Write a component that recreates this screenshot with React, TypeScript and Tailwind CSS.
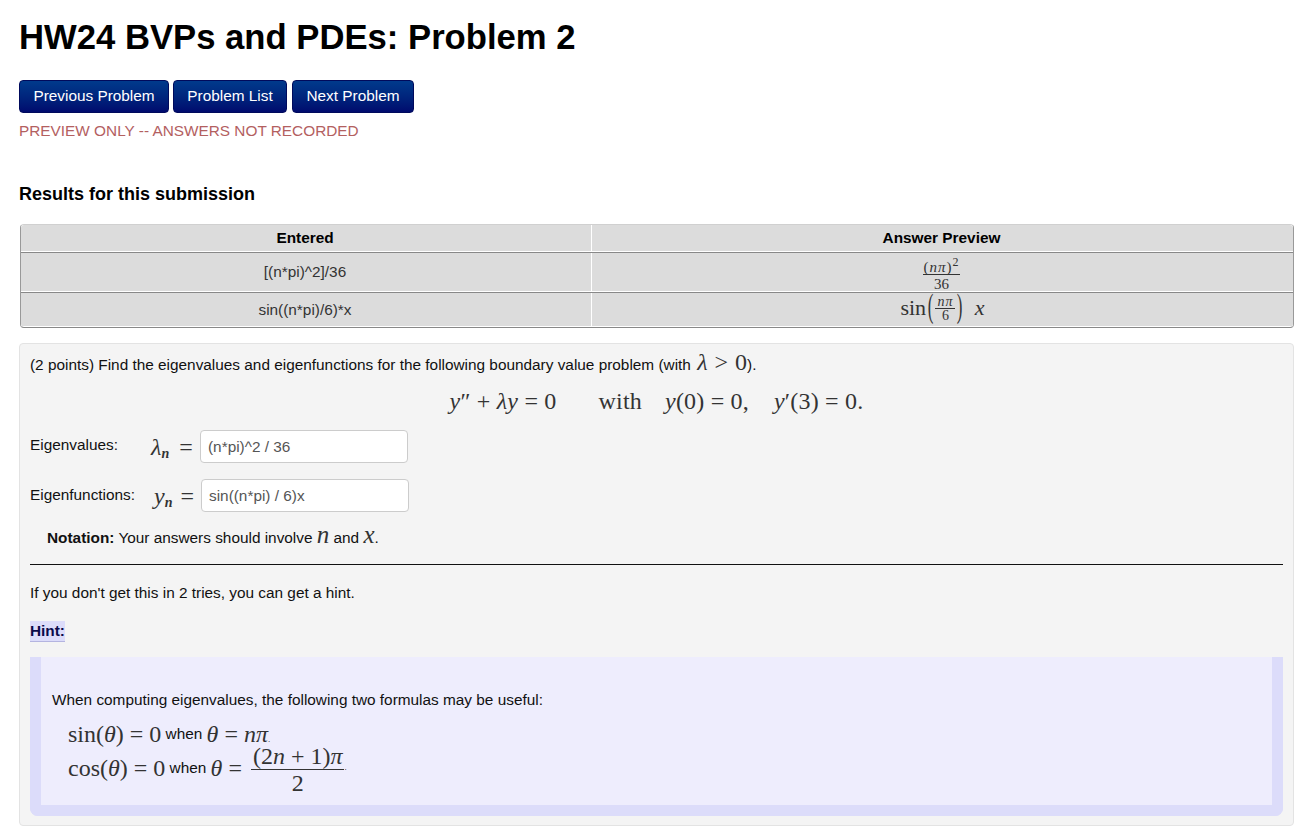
import React from "react";

const M = ({ children, className = "" }: { children: React.ReactNode; className?: string }) => (
  <span className={`font-['Liberation_Serif',serif] text-[#333] ${className}`}>{children}</span>
);
const I = ({ children }: { children: React.ReactNode }) => <i>{children}</i>;

const NavButton = ({ label, className = "" }: { label: string; className?: string }) => (
  <button className={`h-[33px] pb-[2px] rounded-[4px] border border-[#000a5c] bg-gradient-to-b from-[#003a8c] to-[#000a6e] text-white text-[15.36px] leading-none ${className}`}>
    {label}
  </button>
);

const Field = ({ value }: { value: string }) => (
  <input
    readOnly
    value={value}
    className="h-[33px] w-[208px] px-[7px] rounded-[4px] border border-[#ccc] bg-white text-[15.36px] text-[#555] outline-none font-['Liberation_Sans',sans-serif]"
  />
);

const Sep = () => (
  <div className="col-span-2 h-[2px] bg-white flex flex-col justify-end">
    <div className="h-px bg-[#888]" />
  </div>
);

export default function App() {
  return (
    <div className="min-h-[840px] bg-white pl-[19px] pr-[14px] font-['Liberation_Sans',Arial,sans-serif] text-[15.36px] text-[#111] overflow-hidden">
      <h1 className="pt-[16px] h-[80px] text-[34.66px] leading-[42px] font-bold text-black">HW24 BVPs and PDEs: Problem 2</h1>

      <div className="flex h-[33px]">
        <NavButton label="Previous Problem" className="w-[150px] mr-[4px]" />
        <NavButton label="Problem List" className="w-[114px] mr-[5px]" />
        <NavButton label="Next Problem" className="w-[122px]" />
      </div>
      <div className="mt-[9px] h-[18px] leading-[18px] text-[#b3605f]">PREVIEW ONLY -- ANSWERS NOT RECORDED</div>

      <h2 className="mt-[43px] h-[22px] text-[18px] leading-[22px] font-bold text-black">Results for this submission</h2>

      <div className="mt-[19px] ml-[1px] h-[104px] rounded-[4px] border border-[#999] border-t-[#d0d0d0] border-b-[#888] bg-white overflow-hidden">
        <div className="grid grid-cols-[570px_1fr] gap-x-px bg-white">
          <div className="h-[26px] pr-[2px] bg-[#dcdcdc] flex items-center justify-center font-bold text-black">Entered</div>
          <div className="h-[26px] pr-[2px] bg-[#dcdcdc] flex items-center justify-center font-bold text-black">Answer Preview</div>
          <Sep />
          <div className="h-[38px] pr-[2px] bg-[#dcdcdc] flex items-center justify-center text-[#333]">[(n*pi)^2]/36</div>
          <div className="h-[38px] pr-[2px] bg-[#dcdcdc] flex items-center justify-center">
            <M className="inline-flex flex-col items-center text-[15px] leading-[14px]">
              <span className="border-b border-[#333] h-[21px] pt-[6px] tracking-[1px]">(<I>nπ</I>)<sup className="text-[12px] leading-none">2</sup></span>
              <span className="pt-[2px]">36</span>
            </M>
          </div>
          <Sep />
          <div className="h-[33px] pr-[2px] bg-[#dcdcdc] flex items-center justify-center text-[#333]">sin((n*pi)/6)*x</div>
          <div className="h-[33px] bg-[#dcdcdc] flex items-center justify-center">
            <M className="inline-flex items-center text-[22px] leading-none -mt-[3px]">
              <span>sin</span>
              <span className="text-[34px] font-thin scale-x-50 leading-none -mt-[5px] -mx-[1px]">(</span>
              <span className="inline-flex flex-col items-center text-[14px] leading-[11px]">
                <span className="border-b border-[#333] px-[2px] pb-[1px] tracking-[1px]"><I>nπ</I></span>
                <span className="pt-[1px]">6</span>
              </span>
              <span className="text-[34px] font-thin scale-x-50 leading-none -mt-[5px] -mx-[1px]">)</span>
              <I><span className="ml-[10px]">x</span></I>
            </M>
          </div>
        </div>
      </div>

      <div className="mt-[15px] h-[483px] rounded-[4px] border border-[#e3e3e3] bg-[#f4f4f4] px-[10px] pt-[6px]">
        <div className="h-[22px] leading-[22px] flex items-baseline whitespace-pre">
          (2 points) Find the eigenvalues and eigenfunctions for the following boundary value problem (with{" "}
          <M className="text-[24px] leading-none ml-[2px]"><I>λ</I><span className="inline-block w-[7px]" />&gt;<span className="inline-block w-[7px]" />0</M>).
        </div>

        <div className="mt-[14px] h-[30px] flex justify-center items-center whitespace-pre">
          <M className="text-[24px] leading-none tracking-[0.2px]">
            <I>y</I>″ + <I>λy</I> = 0<span className="inline-block w-[42px]" />with<span className="inline-block w-[23px]" /><I>y</I>(0) = 0,<span className="inline-block w-[25px]" /><I>y</I>′(3) = 0.
          </M>
        </div>

        <div className="mt-[14px] h-[33px] flex items-center">
          <span className="w-[121px] pb-[3px]">Eigenvalues:</span>
          <M className="text-[24px] leading-none w-[49px] whitespace-pre"><I>λ<sub className="text-[14px] font-bold">n</sub></I><span className="inline-block w-[4px]" /> =</M>
          <Field value="(n*pi)^2 / 36" />
        </div>

        <div className="mt-[16px] h-[33px] flex items-center">
          <span className="w-[124px] pb-[2px]">Eigenfunctions:</span>
          <M className="text-[24px] leading-none w-[47px] whitespace-pre"><I>y<sub className="text-[14px] font-bold">n</sub></I><span className="inline-block w-[2px]" /> =</M>
          <Field value="sin((n*pi) / 6)x" />
        </div>

        <div className="mt-[10px] ml-[17px] h-[22px] leading-[22px] flex items-baseline whitespace-pre">
          <b>Notation:</b> Your answers should involve <M className="text-[25px] leading-none"><I>n</I></M> and <M className="text-[25px] leading-none"><I>x</I></M>.
        </div>

        <hr className="mt-[20px] border-0 h-px bg-[#111]" />

        <div className="mt-[17px] h-[22px] leading-[22px]">If you don't get this in 2 tries, you can get a hint.</div>

        <div className="mt-[15px] h-[22px]">
          <span className="inline-block h-[21px] leading-[20px] font-bold text-[#0a0a4a] bg-[#dcdcfa] border-b border-[#b4b4e0]">Hint:</span>
        </div>

        <div className="mt-[16px] h-[159px] border-x-[11px] border-b-[11px] border-[#dcdcfa] rounded-b-[8px] bg-[#eeedfd] pl-[11px] pt-[32px]">
          <div className="h-[22px] leading-[22px]">When computing eigenvalues, the following two formulas may be useful:</div>
          <div className="mt-[11px] ml-[16px] h-[24px] flex items-center whitespace-pre">
            <M className="text-[24px] leading-none">sin(<I>θ</I>) = 0</M>
            <span> when </span>
            <M className="text-[24px] leading-none"><I>θ</I> = <I>nπ</I></M>
            <span className="text-[8px] self-end">.</span>
          </div>
          <div className="-mt-[3px] ml-[16px] h-[50px] flex items-center whitespace-pre">
            <M className="text-[24px] leading-none">cos(<I>θ</I>) = 0</M>
            <span> when </span>
            <M className="text-[24px] leading-none"><I>θ</I> = </M>
            <M className="inline-flex flex-col items-center ml-[3px] text-[24px] leading-[26px]">
              <span className="border-b border-[#333] px-[2px] h-[27px]">(2<I>n</I> + 1)<I>π</I></span>
              <span className="h-[24px]">2</span>
            </M>
            <span className="text-[8px]">.</span>
          </div>
        </div>
      </div>
    </div>
  );
}
